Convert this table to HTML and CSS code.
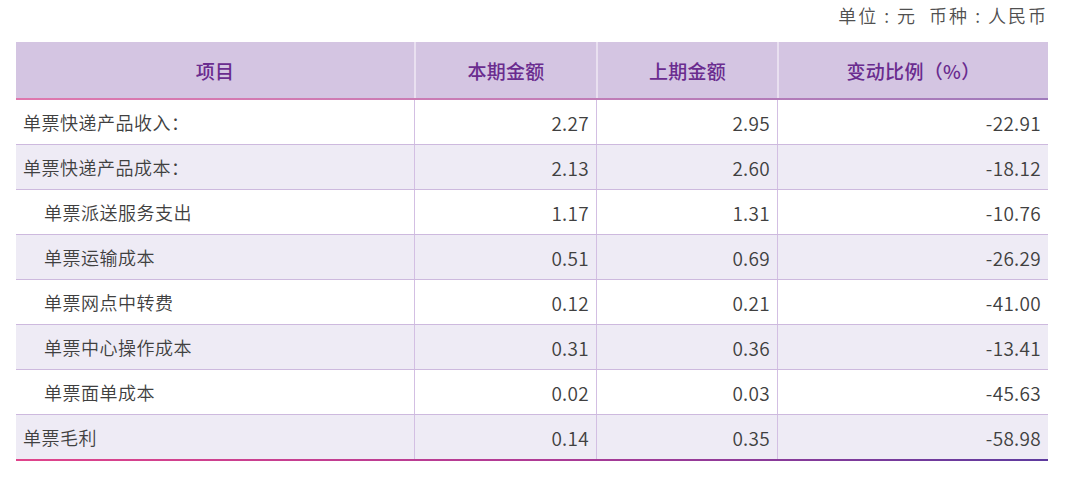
FILE: index.html
```html
<!DOCTYPE html>
<html lang="zh">
<head>
<meta charset="utf-8">
<link rel="stylesheet" href="styles.css">
</head>
<body>
<div class="page">
  <div class="caption">单位 : 元&nbsp;&nbsp;币种 : 人民币</div>
  <div class="table">
    <div class="row head">
      <div class="cell">项目</div>
      <div class="cell">本期金额</div>
      <div class="cell">上期金额</div>
      <div class="cell">变动比例（%）</div>
    </div>
    <div class="rule top"></div>
    <div class="row">
      <div class="cell name">单票快递产品收入：</div>
      <div class="cell num">2.27</div>
      <div class="cell num">2.95</div>
      <div class="cell num">-22.91</div>
    </div>
    <div class="row alt">
      <div class="cell name">单票快递产品成本：</div>
      <div class="cell num">2.13</div>
      <div class="cell num">2.60</div>
      <div class="cell num">-18.12</div>
    </div>
    <div class="row">
      <div class="cell name sub">单票派送服务支出</div>
      <div class="cell num">1.17</div>
      <div class="cell num">1.31</div>
      <div class="cell num">-10.76</div>
    </div>
    <div class="row alt">
      <div class="cell name sub">单票运输成本</div>
      <div class="cell num">0.51</div>
      <div class="cell num">0.69</div>
      <div class="cell num">-26.29</div>
    </div>
    <div class="row">
      <div class="cell name sub">单票网点中转费</div>
      <div class="cell num">0.12</div>
      <div class="cell num">0.21</div>
      <div class="cell num">-41.00</div>
    </div>
    <div class="row alt">
      <div class="cell name sub">单票中心操作成本</div>
      <div class="cell num">0.31</div>
      <div class="cell num">0.36</div>
      <div class="cell num">-13.41</div>
    </div>
    <div class="row">
      <div class="cell name sub">单票面单成本</div>
      <div class="cell num">0.02</div>
      <div class="cell num">0.03</div>
      <div class="cell num">-45.63</div>
    </div>
    <div class="row alt last">
      <div class="cell name">单票毛利</div>
      <div class="cell num">0.14</div>
      <div class="cell num">0.35</div>
      <div class="cell num">-58.98</div>
    </div>
    <div class="rule bottom"></div>
  </div>
</div>
</body>
</html>
```
FILE: styles.css
```css
html, body {
  margin: 0;
  padding: 0;
  background: #ffffff;
}
body {
  font-family: "Noto Sans CJK SC", "Noto Sans", sans-serif;
  color: #404040;
}
.page {
  width: 1080px;
  height: 480px;
  padding: 0 32px 0 16px;
  box-sizing: border-box;
}
.caption {
  height: 42px;
  padding-top: 1px;
  padding-right: 0;
  box-sizing: border-box;
  text-align: right;
  font-size: 18px;
  line-height: 28px;
  color: #505050;
  font-weight: 350;
  letter-spacing: 2px;
}
.table {
  width: 1032px;
}
.row {
  display: grid;
  grid-template-columns: 398px 182px 181px 271px;
  height: 45px;
  box-sizing: border-box;
  border-bottom: 1px solid #cdb9de;
}
.row.alt {
  background: #eeebf5;
}
.row.last {
  border-bottom: none;
  height: 44px;
}
.cell {
  display: flex;
  align-items: center;
  font-size: 18px;
  font-weight: 350;
  letter-spacing: 0.5px;
  border-left: 1px solid #d3bfe3;
  box-sizing: border-box;
}
.cell:first-child {
  border-left: none;
}
.row.head {
  height: 56px;
  background: #d4c5e2;
  border-bottom: none;
}
.row.head .cell {
  justify-content: center;
  font-weight: 500;
  color: #6a2c8f;
  font-size: 19px;
  letter-spacing: 0.3px;
  border-left: 2px solid #e9e0f0;
}
.row.head .cell:first-child {
  border-left: none;
}
.cell.name {
  padding-left: 7px;
}
.cell.name.sub {
  padding-left: 28px;
}
.cell.num {
  justify-content: flex-end;
  padding-right: 7px;
  font-size: 19px;
  letter-spacing: 0.3px;
}
.rule {
  height: 2px;
}
.rule.top {
  background: linear-gradient(to right, #df77ad, #c57db6 50%, #9f7abb);
}
.rule.bottom {
  background: linear-gradient(to right, #e0448b, #b03a95 50%, #5e3a9e);
}
```
